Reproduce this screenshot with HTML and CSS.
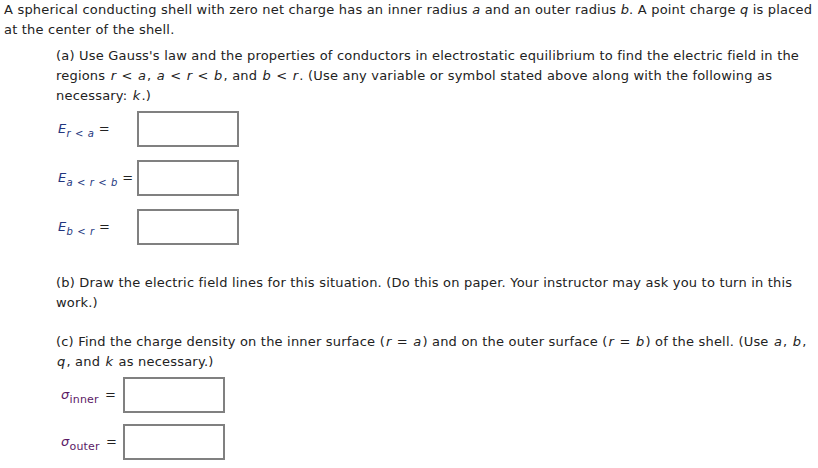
FILE: index.html
```html
<!DOCTYPE html>
<html>
<head>
<meta charset="utf-8">
<link rel="stylesheet" href="styles.css">
</head>
<body>
<p class="intro">A spherical conducting shell with zero net charge has an inner radius <i>a</i> and an outer radius <i>b</i>. A point charge <i>q</i> is placed at the center of the shell.</p>
<div class="part">
  <p class="q qa">(a) Use Gauss's law and the properties of conductors in electrostatic equilibrium to find the electric field in the regions <i>r</i> &lt; <i>a</i>, <i>a</i> &lt; <i>r</i> &lt; <i>b</i>, and <i>b</i> &lt; <i>r</i>. (Use any variable or symbol stated above along with the following as necessary: <i>k</i>.)</p>
  <div class="answers e-answers">
    <div class="lbl"><span class="mE"><i>E</i><sub><i>r</i> &lt; <i>a</i></sub></span> =</div>
    <div class="box"></div>
    <div class="lbl"><span class="mE"><i>E</i><sub><i>a</i> &lt; <i>r</i> &lt; <i>b</i></sub></span> =</div>
    <div class="box"></div>
    <div class="lbl"><span class="mE"><i>E</i><sub><i>b</i> &lt; <i>r</i></sub></span> =</div>
    <div class="box"></div>
  </div>
  <p class="q qb">(b) Draw the electric field lines for this situation. (Do this on paper. Your instructor may ask you to turn in this work.)</p>
  <p class="q qc">(c) Find the charge density on the inner surface (<i>r</i> = <i>a</i>) and on the outer surface (<i>r</i> = <i>b</i>) of the shell. (Use <i>a</i>, <i>b</i>, <i>q</i>, and <i>k</i> as necessary.)</p>
  <div class="answers s-answers">
    <div class="lbl"><span class="mS"><i>σ</i><sub>inner</sub></span> <span class="eq">=</span></div>
    <div class="box"></div>
    <div class="lbl"><span class="mS"><i>σ</i><sub>outer</sub></span> <span class="eq">=</span></div>
    <div class="box"></div>
  </div>
</div>
</body>
</html>
```
FILE: styles.css
```css
html, body {
  margin: 0;
  padding: 0;
  background: #fff;
}
body {
  padding: 0 0 0 4px;
  font-family: "DejaVu Sans", Verdana, sans-serif;
  font-size: 13px;
  line-height: 20px;
  letter-spacing: 0.2px;
  color: #222;
}
p {
  margin: 0;
}
.q i {
  padding: 0 1px;
}
.part {
  padding-left: 52px;
  padding-right: 8px;
}
.qa {
  margin-top: 6px;
}
.answers {
  display: grid;
  grid-template-columns: auto 102px;
  align-items: center;
  justify-content: start;
}
.e-answers {
  margin-top: 5px;
  row-gap: 13px;
  column-gap: 4px;
  padding-left: 2px;
}
.s-answers {
  margin-top: 5px;
  row-gap: 11px;
  column-gap: 6px;
  padding-left: 5px;
}
.box {
  height: 36px;
  box-sizing: border-box;
  border: 2px solid #808080;
  background: #fff;
}
.lbl {
  white-space: nowrap;
  font-size: 13px;
}
.mE {
  color: #23367e;
}
.mS {
  color: #5b1a66;
}
.mE sub, .mS sub {
  font-size: 10px;
  vertical-align: -4px;
  line-height: 10px;
  letter-spacing: 0.6px;
}
.mS sub {
  font-size: 11px;
  letter-spacing: 0.2px;
}
.eq {
  padding-left: 2px;
}
.qb {
  margin-top: 28px;
}
.qc {
  margin-top: 19px;
}
.s-answers .box + .lbl {
  margin-top: -1px;
}
```
